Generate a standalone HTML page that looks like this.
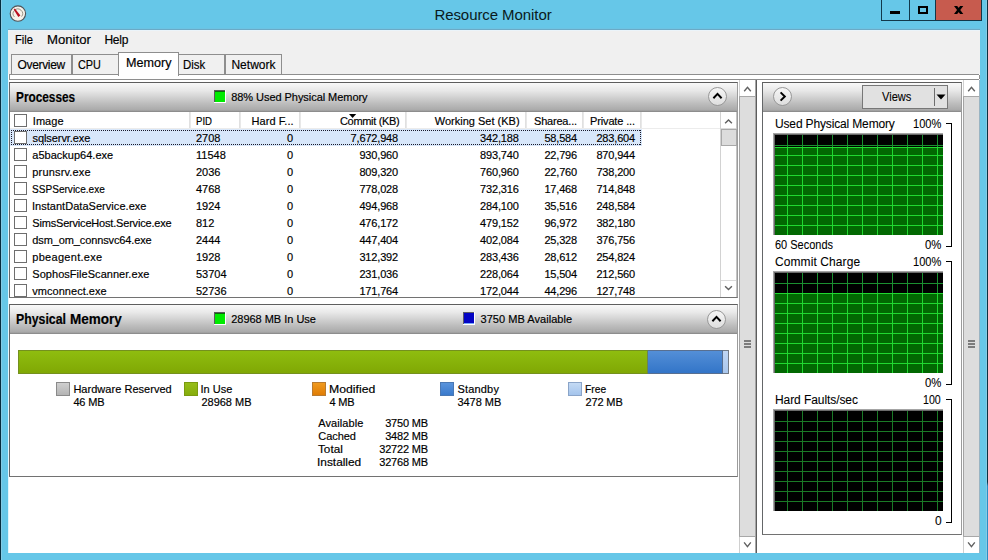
<!DOCTYPE html>
<html><head><meta charset="utf-8"><title>Resource Monitor</title>
<style>
html,body{margin:0;padding:0}
body{width:988px;height:560px;overflow:hidden;background:#66c7e8;position:relative;font-family:"Liberation Sans",sans-serif;font-size:11px;color:#000;-webkit-text-stroke:0.17px #000}
.a{position:absolute}
.t{position:absolute;white-space:nowrap;line-height:17px;height:17px}
.r{text-align:right;letter-spacing:-0.17px}
.client{left:8px;top:30px;width:972px;height:523px;background:#fff}
.tab{position:absolute;top:54px;height:20px;border:1px solid #8e8e8e;border-bottom:none;background:#f0f0f0;box-sizing:border-box;font-size:12px;line-height:20px}
.panel{position:absolute;border:1px solid #727272;border-top-color:#5e5e5e;border-left-color:#646668;border-right-color:#9c9c9c;box-sizing:border-box;background:#fff}
.hdr{position:absolute;left:0;right:0;top:0;height:29px;background:linear-gradient(#f9f9f9 0,#e9e9e9 25%,#d3d3d3 48%,#bcbcbc 72%,#a9a9a9 94%,#8e8e8e 97%,#8c8c8c 100%)}
.hb{position:absolute;font-weight:bold;font-size:12px;line-height:29px;top:0;white-space:nowrap}
.cb{position:absolute;left:14px;width:13px;height:13px;box-sizing:border-box;border:1px solid #6e6e6e;background:#fff}
.row{position:absolute;left:11px;width:631px;height:17px}
.sep{position:absolute;top:112px;width:2px;height:16px;margin-left:-1px;background:linear-gradient(90deg,#dcdcdc,#ececec)}
.sq{position:absolute;width:13px;height:13px;box-sizing:border-box;border:1px solid #9a9a9a}
.circ{position:absolute;width:19px;height:19px;box-sizing:border-box;border:1px solid #989898;border-radius:50%;background:linear-gradient(#f6f6f6,#dedede)}
.graph{position:absolute;left:774px;width:170px;height:101px;background:#000;box-sizing:border-box;border-left:1px solid #c8c8c8;border-top:1px solid #c8c8c8;overflow:hidden}
</style></head><body>

<div class="a" style="left:0;top:0;width:1px;height:560px;background:#042c3e"></div>
<div class="a" style="left:1px;top:0;width:1px;height:560px;background:#86cbe4"></div>
<div class="a" style="left:987px;top:0;width:1px;height:560px;background:linear-gradient(#0a3042 0,#0a3042 482px,#2a8cc4 486px,#2a8cc4 100%)"></div>
<div class="a" style="left:8px;top:28px;width:972px;height:1px;background:#6dc3e3"></div>
<div class="a" style="left:8px;top:29px;width:972px;height:1px;background:#6baac6"></div>
<div class="t" style="left:434.4px;top:6px;letter-spacing:-0.07px;font-size:15px;line-height:18px;height:18px;-webkit-text-stroke:0;color:#0a1a20">Resource Monitor</div>
<svg class="a" style="left:9px;top:5px" width="18" height="18" viewBox="0 0 18 18"><circle cx="8.9" cy="8.6" r="7.7" fill="#f6f2ea" stroke="#505458" stroke-width="1.1"/><path d="M5.4 11.9 A4.7 4.7 0 1 1 12.6 11.6" fill="none" stroke="#8f897c" stroke-width="0.9"/><path d="M4.7 4.4 L5.9 3.6 L11.4 10.5 L9.3 12 Z" fill="#b90f1f"/></svg>
<div class="a" style="left:881px;top:0;width:101px;height:21px;background:#12384a"></div>
<div class="a" style="left:882px;top:0;width:27px;height:20px;background:#66c7e8"></div>
<div class="a" style="left:910px;top:0;width:25px;height:20px;background:#66c7e8"></div>
<div class="a" style="left:936px;top:0;width:45px;height:20px;background:#c75b4e"></div>
<div class="a" style="left:890px;top:11px;width:10px;height:3px;background:#000"></div>
<div class="a" style="left:918px;top:6px;width:10px;height:8px;box-sizing:border-box;border:2px solid #000"></div>
<svg class="a" style="left:954px;top:5.9px" width="10" height="9" viewBox="0 0 10 9"><path d="M0 0 H3.2 L9.3 8.1 H6.1 Z M6.1 0 H9.3 L3.2 8.1 H0 Z" fill="#000"/></svg>
<div class="a client"></div>
<div class="a" style="left:8px;top:80px;width:1px;height:473px;background:#e2f6fe"></div>
<div class="a" style="left:8px;top:30px;width:972px;height:44px;background:#f0f0f0"></div>
<div class="a" style="left:8px;top:30px;width:972px;height:1px;background:#ebf4fa"></div>
<div class="t" style="left:15.0px;top:31px;transform:scaleX(0.928);transform-origin:0 0;font-size:12px;line-height:18px;height:18px">File</div>
<div class="t" style="left:46.5px;top:31px;transform:scaleX(1.095);transform-origin:0 0;font-size:12px;line-height:18px;height:18px">Monitor</div>
<div class="t" style="left:104.4px;top:31px;letter-spacing:-0.24px;font-size:12px;line-height:18px;height:18px">Help</div>
<div class="tab" style="left:11px;width:61px"></div>
<div class="tab" style="left:72px;width:47px"></div>
<div class="tab" style="left:178px;width:47px"></div>
<div class="tab" style="left:225px;width:57px"></div>
<div class="t" style="left:17.5px;top:55px;letter-spacing:-0.33px;font-size:12px;line-height:20px;height:20px">Overview</div>
<div class="t" style="left:78.2px;top:55px;transform:scaleX(0.902);transform-origin:0 0;font-size:12px;line-height:20px;height:20px">CPU</div>
<div class="t" style="left:183.0px;top:55px;transform:scaleX(0.953);transform-origin:0 0;font-size:12px;line-height:20px;height:20px">Disk</div>
<div class="t" style="left:231.4px;top:55px;letter-spacing:0.03px;font-size:12px;line-height:20px;height:20px">Network</div>
<div class="a" style="left:9px;top:74px;width:970px;height:1px;background:#8e8e8e"></div>
<div class="a" style="left:9px;top:79px;width:970px;height:1px;background:#8e8e8e"></div>
<div class="a" style="left:9px;top:75px;width:1px;height:4px;background:#8e8e8e"></div>
<div class="a" style="left:979px;top:75px;width:1px;height:4px;background:#8e8e8e"></div>
<div class="tab" style="left:118px;top:52px;width:61px;height:24px;background:#fff"></div>
<div class="t" style="left:125.5px;top:53px;transform:scaleX(1.050);transform-origin:0 0;font-size:12px;line-height:20px;height:20px">Memory</div>
<div class="panel" style="left:9px;top:82px;width:729px;height:216px"><div class="hdr"></div></div>
<div class="t" style="left:15.9px;top:83px;transform:scaleX(0.844);transform-origin:0 0;font-size:14px;font-weight:bold;line-height:29px;height:29px">Processes</div>
<div class="a" style="left:214px;top:90px;width:12px;height:13px;background:#fff"></div>
<div class="a" style="left:214px;top:90px;width:11px;height:12px;background:#5a5a5a"></div>
<div class="a" style="left:215px;top:91px;width:10px;height:11px;background:#00ea00"></div>
<div class="a" style="left:215px;top:91px;width:10px;height:1px;background:#0a6a0a"></div>
<div class="t" style="left:231.2px;top:89px;letter-spacing:-0.05px">88% Used Physical Memory</div>
<div class="circ" style="left:708px;top:87px"></div>
<svg class="a" style="left:708px;top:87px" width="19" height="19"><path d="M5.4 11.2 L9.5 6.9 L13.6 11.2" stroke="#000" stroke-width="2" fill="none"/></svg>
<div class="sep" style="left:190px"></div>
<div class="sep" style="left:240px"></div>
<div class="sep" style="left:300px"></div>
<div class="sep" style="left:406px"></div>
<div class="sep" style="left:526px"></div>
<div class="sep" style="left:583px"></div>
<div class="sep" style="left:641px"></div>
<div class="a" style="left:10px;top:128px;width:710px;height:1px;background:#ececec"></div>
<div class="cb" style="top:114px"></div>
<div class="t" style="left:32.8px;top:113px;letter-spacing:0.04px">Image</div>
<div class="t" style="left:196.4px;top:113px;transform:scaleX(0.870);transform-origin:0 0">PID</div>
<div class="t" style="left:251.4px;top:113px;letter-spacing:0.09px">Hard F...</div>
<div class="t" style="left:340.0px;top:113px;letter-spacing:-0.33px">Commit (KB)</div>
<div class="t" style="left:434.7px;top:113px;letter-spacing:0.01px">Working Set (KB)</div>
<div class="t" style="left:534.0px;top:113px;letter-spacing:-0.20px">Sharea...</div>
<div class="t" style="left:590.0px;top:113px;letter-spacing:-0.14px">Private ...</div>
<svg class="a" style="left:349px;top:114px" width="8" height="5"><path d="M0 0.1 L7.2 0.1 L3.6 4 Z" fill="#000"/></svg>
<div class="a" style="left:10px;top:129px;width:632px;height:17px;background:#d8e7fa"></div>
<div class="a" style="left:11px;top:130px;width:630px;height:1px;background:repeating-linear-gradient(90deg,#1a1a2a 0 1px,transparent 1px 2px)"></div>
<div class="a" style="left:11px;top:144px;width:630px;height:1px;background:repeating-linear-gradient(90deg,#1a1a2a 0 1px,transparent 1px 2px)"></div>
<div class="a" style="left:11px;top:130px;width:1px;height:15px;background:repeating-linear-gradient(180deg,#1a1a2a 0 1px,transparent 1px 2px)"></div>
<div class="a" style="left:640px;top:130px;width:1px;height:15px;background:repeating-linear-gradient(180deg,#1a1a2a 0 1px,transparent 1px 2px)"></div>
<div class="cb" style="top:131px"></div>
<div class="t" style="left:32.5px;top:130px;letter-spacing:-0.07px">sqlservr.exe</div>
<div class="t" style="left:196px;top:130px">2708</div>
<div class="t r" style="left:240px;width:53px;top:130px">0</div>
<div class="t r" style="left:300px;width:98px;top:130px">7,672,948</div>
<div class="t r" style="left:406px;width:112.7px;top:130px">342,188</div>
<div class="t r" style="left:526px;width:51px;top:130px">58,584</div>
<div class="t r" style="left:583px;width:52px;top:130px">283,604</div>
<div class="cb" style="top:148px"></div>
<div class="t" style="left:32.3px;top:147px;letter-spacing:0.01px">a5backup64.exe</div>
<div class="t" style="left:196px;top:147px">11548</div>
<div class="t r" style="left:240px;width:53px;top:147px">0</div>
<div class="t r" style="left:300px;width:98px;top:147px">930,960</div>
<div class="t r" style="left:406px;width:112.7px;top:147px">893,740</div>
<div class="t r" style="left:526px;width:51px;top:147px">22,796</div>
<div class="t r" style="left:583px;width:52px;top:147px">870,944</div>
<div class="cb" style="top:165px"></div>
<div class="t" style="left:32.3px;top:164px;letter-spacing:0.17px">prunsrv.exe</div>
<div class="t" style="left:196px;top:164px">2036</div>
<div class="t r" style="left:240px;width:53px;top:164px">0</div>
<div class="t r" style="left:300px;width:98px;top:164px">809,320</div>
<div class="t r" style="left:406px;width:112.7px;top:164px">760,960</div>
<div class="t r" style="left:526px;width:51px;top:164px">22,760</div>
<div class="t r" style="left:583px;width:52px;top:164px">738,200</div>
<div class="cb" style="top:182px"></div>
<div class="t" style="left:31.5px;top:181px;transform:scaleX(0.916);transform-origin:0 0">SSPService.exe</div>
<div class="t" style="left:196px;top:181px">4768</div>
<div class="t r" style="left:240px;width:53px;top:181px">0</div>
<div class="t r" style="left:300px;width:98px;top:181px">778,028</div>
<div class="t r" style="left:406px;width:112.7px;top:181px">732,316</div>
<div class="t r" style="left:526px;width:51px;top:181px">17,468</div>
<div class="t r" style="left:583px;width:52px;top:181px">714,848</div>
<div class="cb" style="top:199px"></div>
<div class="t" style="left:31.9px;top:198px;letter-spacing:0.04px">InstantDataService.exe</div>
<div class="t" style="left:196px;top:198px">1924</div>
<div class="t r" style="left:240px;width:53px;top:198px">0</div>
<div class="t r" style="left:300px;width:98px;top:198px">494,968</div>
<div class="t r" style="left:406px;width:112.7px;top:198px">284,100</div>
<div class="t r" style="left:526px;width:51px;top:198px">35,516</div>
<div class="t r" style="left:583px;width:52px;top:198px">248,584</div>
<div class="cb" style="top:216px"></div>
<div class="t" style="left:32.3px;top:215px;letter-spacing:-0.19px">SimsServiceHost.Service.exe</div>
<div class="t" style="left:196px;top:215px">812</div>
<div class="t r" style="left:240px;width:53px;top:215px">0</div>
<div class="t r" style="left:300px;width:98px;top:215px">476,172</div>
<div class="t r" style="left:406px;width:112.7px;top:215px">479,152</div>
<div class="t r" style="left:526px;width:51px;top:215px">96,972</div>
<div class="t r" style="left:583px;width:52px;top:215px">382,180</div>
<div class="cb" style="top:233px"></div>
<div class="t" style="left:32.3px;top:232px;letter-spacing:-0.12px">dsm_om_connsvc64.exe</div>
<div class="t" style="left:196px;top:232px">2444</div>
<div class="t r" style="left:240px;width:53px;top:232px">0</div>
<div class="t r" style="left:300px;width:98px;top:232px">447,404</div>
<div class="t r" style="left:406px;width:112.7px;top:232px">402,084</div>
<div class="t r" style="left:526px;width:51px;top:232px">25,328</div>
<div class="t r" style="left:583px;width:52px;top:232px">376,756</div>
<div class="cb" style="top:250px"></div>
<div class="t" style="left:32.3px;top:249px;letter-spacing:0.29px">pbeagent.exe</div>
<div class="t" style="left:196px;top:249px">1928</div>
<div class="t r" style="left:240px;width:53px;top:249px">0</div>
<div class="t r" style="left:300px;width:98px;top:249px">312,392</div>
<div class="t r" style="left:406px;width:112.7px;top:249px">283,436</div>
<div class="t r" style="left:526px;width:51px;top:249px">28,612</div>
<div class="t r" style="left:583px;width:52px;top:249px">254,824</div>
<div class="cb" style="top:267px"></div>
<div class="t" style="left:32.3px;top:266px;letter-spacing:0.04px">SophosFileScanner.exe</div>
<div class="t" style="left:196px;top:266px">53704</div>
<div class="t r" style="left:240px;width:53px;top:266px">0</div>
<div class="t r" style="left:300px;width:98px;top:266px">231,036</div>
<div class="t r" style="left:406px;width:112.7px;top:266px">228,064</div>
<div class="t r" style="left:526px;width:51px;top:266px">15,504</div>
<div class="t r" style="left:583px;width:52px;top:266px">212,560</div>
<div class="cb" style="top:284px"></div>
<div class="t" style="left:32.3px;top:283px;letter-spacing:0.03px">vmconnect.exe</div>
<div class="t" style="left:196px;top:283px">52736</div>
<div class="t r" style="left:240px;width:53px;top:283px">0</div>
<div class="t r" style="left:300px;width:98px;top:283px">171,764</div>
<div class="t r" style="left:406px;width:112.7px;top:283px">172,044</div>
<div class="t r" style="left:526px;width:51px;top:283px">44,296</div>
<div class="t r" style="left:583px;width:52px;top:283px">127,748</div>
<div class="a" style="left:10px;top:297px;width:727px;height:1px;background:#727272"></div>
<div class="a" style="left:10px;top:298px;width:727px;height:6px;background:#fff"></div>
<div class="a" style="left:720px;top:112px;width:17px;height:185px;background:#fff;border-left:1px solid #d2d2d2;box-sizing:border-box"></div>
<div class="a" style="left:721px;top:128px;width:16px;height:1px;background:#dadada"></div>
<div class="a" style="left:721px;top:280px;width:16px;height:1px;background:#dadada"></div>
<div class="a" style="left:736px;top:112px;width:1px;height:185px;background:#c4c4c4"></div>
<div class="a" style="left:721px;top:129px;width:16px;height:17px;background:#dcdcdc;border:1px solid #a8a8a8;box-sizing:border-box"></div>
<svg class="a" style="left:721px;top:112px" width="16" height="17"><path d="M4.1 11.3 L7.5 7.9 L10.9 11.3" stroke="#606060" stroke-width="1.4" fill="none"/></svg>
<svg class="a" style="left:721px;top:280px" width="16" height="17"><path d="M4.1 6.2 L7.5 9.6 L10.9 6.2" stroke="#606060" stroke-width="1.4" fill="none"/></svg>
<div class="panel" style="left:9px;top:304px;width:729px;height:173px"><div class="hdr"></div></div>
<div class="t" style="left:16.0px;top:305px;transform:scaleX(0.880);transform-origin:0 0;font-size:14px;font-weight:bold;line-height:29px;height:29px">Physical</div>
<div class="t" style="left:70.0px;top:305px;transform:scaleX(0.965);transform-origin:0 0;font-size:14px;font-weight:bold;line-height:29px;height:29px">Memory</div>
<div class="a" style="left:214px;top:312px;width:12px;height:13px;background:#fff"></div>
<div class="a" style="left:214px;top:312px;width:11px;height:12px;background:#5a5a5a"></div>
<div class="a" style="left:215px;top:313px;width:10px;height:11px;background:#00ea00"></div>
<div class="a" style="left:215px;top:313px;width:10px;height:1px;background:#0a6a0a"></div>
<div class="t" style="left:231.2px;top:311px;letter-spacing:-0.02px">28968 MB In Use</div>
<div class="a" style="left:463px;top:312px;width:12px;height:13px;background:#fff"></div>
<div class="a" style="left:463px;top:312px;width:11px;height:12px;background:#5a5a6a"></div>
<div class="a" style="left:464px;top:313px;width:10px;height:11px;background:#0404c4"></div>
<div class="a" style="left:464px;top:323px;width:10px;height:1px;background:#78a8ff"></div>
<div class="t" style="left:480.5px;top:311px;letter-spacing:0.04px">3750 MB Available</div>
<div class="circ" style="left:707px;top:309.5px"></div>
<svg class="a" style="left:707px;top:309.5px" width="19" height="19"><path d="M5.4 11.2 L9.5 6.9 L13.6 11.2" stroke="#000" stroke-width="2" fill="none"/></svg>
<div class="a" style="left:18px;top:350px;width:630px;height:24px;box-sizing:border-box;border:1px solid #74901e;border-right-color:#6c8450;background:linear-gradient(#8fbd0f,#80a804)"></div>
<div class="a" style="left:648px;top:350px;width:75px;height:24px;box-sizing:border-box;border:1px solid #586f90;border-left:none;background:linear-gradient(#548fd7,#3375c8)"></div>
<div class="a" style="left:723px;top:350px;width:6px;height:24px;box-sizing:border-box;border:1px solid #727a84;border-left:none;background:linear-gradient(#bfd6f4,#a9c6ec)"></div>
<div class="sq" style="left:56px;top:382px;width:14px;height:14px;background:linear-gradient(#cfcfcf,#b4b4b4);border-color:#8a8a8a"></div>
<div class="t" style="left:73.4px;top:382px;letter-spacing:0.03px;line-height:15px;height:15px">Hardware Reserved</div>
<div class="t" style="left:73.4px;top:395px;letter-spacing:-0.14px;line-height:15px;height:15px">46 MB</div>
<div class="sq" style="left:184px;top:382px;width:14px;height:14px;background:linear-gradient(#96bd1a,#86ad0c);border-color:#7a9a10"></div>
<div class="t" style="left:200.4px;top:382px;letter-spacing:0.03px;line-height:15px;height:15px">In Use</div>
<div class="t" style="left:201.4px;top:395px;letter-spacing:-0.00px;line-height:15px;height:15px">28968 MB</div>
<div class="sq" style="left:312px;top:382px;width:14px;height:14px;background:linear-gradient(#f09a20,#e07c04);border-color:#b87a30"></div>
<div class="t" style="left:329.4px;top:382px;transform:scaleX(1.112);transform-origin:0 0;line-height:15px;height:15px">Modified</div>
<div class="t" style="left:329.4px;top:395px;letter-spacing:-0.15px;line-height:15px;height:15px">4 MB</div>
<div class="sq" style="left:440px;top:382px;width:14px;height:14px;background:linear-gradient(#5a94dc,#3a7acc);border-color:#4a78b4"></div>
<div class="t" style="left:457.4px;top:382px;letter-spacing:0.19px;line-height:15px;height:15px">Standby</div>
<div class="t" style="left:457.4px;top:395px;letter-spacing:-0.01px;line-height:15px;height:15px">3478 MB</div>
<div class="sq" style="left:568px;top:382px;width:14px;height:14px;background:linear-gradient(#c4daf4,#a4c4ec);border-color:#8aa4c8"></div>
<div class="t" style="left:585.4px;top:382px;transform:scaleX(0.933);transform-origin:0 0;line-height:15px;height:15px">Free</div>
<div class="t" style="left:585.4px;top:395px;letter-spacing:-0.11px;line-height:15px;height:15px">272 MB</div>
<div class="t" style="left:318.3px;top:416px;letter-spacing:0.08px;line-height:14px;height:14px">Available</div>
<div class="t r" style="left:360px;width:68px;top:416px;line-height:14px;height:14px">3750 MB</div>
<div class="t" style="left:318.3px;top:429px;letter-spacing:-0.06px;line-height:14px;height:14px">Cached</div>
<div class="t r" style="left:360px;width:68px;top:429px;line-height:14px;height:14px">3482 MB</div>
<div class="t" style="left:318.3px;top:442px;transform:scaleX(1.066);transform-origin:0 0;line-height:14px;height:14px">Total</div>
<div class="t r" style="left:360px;width:68px;top:442px;line-height:14px;height:14px">32722 MB</div>
<div class="t" style="left:317.2px;top:455px;transform:scaleX(1.079);transform-origin:0 0;line-height:14px;height:14px">Installed</div>
<div class="t r" style="left:360px;width:68px;top:455px;line-height:14px;height:14px">32768 MB</div>
<div class="a" style="left:739px;top:80px;width:17px;height:473px;background:#dddddd;border-left:1px solid #a4a4a4;box-sizing:border-box"></div>
<div class="a" style="left:739px;top:96px;width:17px;height:1px;background:#a8a8a8"></div>
<div class="a" style="left:739px;top:536px;width:17px;height:1px;background:#a8a8a8"></div>
<div class="a" style="left:739px;top:80px;width:17px;height:16px;background:#fff;border-left:1px solid #d0d0d0;box-sizing:border-box"></div>
<div class="a" style="left:739px;top:537px;width:17px;height:16px;background:#fff;border-left:1px solid #d0d0d0;box-sizing:border-box"></div>
<svg class="a" style="left:739px;top:80px" width="17" height="16"><path d="M5.2 11.2 L8.5 7.4 L11.8 11.2" stroke="#606060" stroke-width="1.4" fill="none"/></svg>
<svg class="a" style="left:739px;top:537px" width="17" height="16"><path d="M5.1 5.4 L8.45 9.6 L11.8 5.4" stroke="#606060" stroke-width="1.4" fill="none"/></svg>
<svg class="a" style="left:744px;top:339px" width="7" height="10"><path d="M0 2 H7 M0 5 H7 M0 8 H7" stroke="#5c5c5c" stroke-width="1.4"/></svg>
<div class="a" style="left:755px;top:80px;width:1px;height:473px;background:#a6a6a6"></div>
<div class="a" style="left:756px;top:80px;width:1px;height:473px;background:#5c5c5c"></div>
<div class="a" style="left:963px;top:80px;width:17px;height:473px;background:#dddddd;border-left:1px solid #a4a4a4;box-sizing:border-box"></div>
<div class="a" style="left:963px;top:96px;width:17px;height:1px;background:#a8a8a8"></div>
<div class="a" style="left:963px;top:536px;width:17px;height:1px;background:#a8a8a8"></div>
<div class="a" style="left:963px;top:80px;width:17px;height:16px;background:#fff;border-left:1px solid #d0d0d0;box-sizing:border-box"></div>
<div class="a" style="left:963px;top:537px;width:17px;height:16px;background:#fff;border-left:1px solid #d0d0d0;box-sizing:border-box"></div>
<svg class="a" style="left:963px;top:80px" width="17" height="16"><path d="M5.2 11.2 L8.5 7.4 L11.8 11.2" stroke="#606060" stroke-width="1.4" fill="none"/></svg>
<svg class="a" style="left:963px;top:537px" width="17" height="16"><path d="M5.1 5.4 L8.45 9.6 L11.8 5.4" stroke="#606060" stroke-width="1.4" fill="none"/></svg>
<svg class="a" style="left:968px;top:339px" width="7" height="10"><path d="M0 2 H7 M0 5 H7 M0 8 H7" stroke="#5c5c5c" stroke-width="1.4"/></svg>
<div class="a" style="left:979px;top:80px;width:1px;height:473px;background:#9ab4c2"></div>
<div class="a" style="left:986px;top:0;width:1px;height:560px;background:#86cbe4"></div>
<div class="panel" style="left:762px;top:82px;width:200px;height:453px"><div class="hdr"></div></div>
<div class="circ" style="left:773px;top:87px"></div>
<svg class="a" style="left:773px;top:87px" width="19" height="19"><path d="M7.6 5.4 L11.8 9.5 L7.6 13.6" stroke="#000" stroke-width="2" fill="none"/></svg>
<div class="a" style="left:862px;top:85px;width:86px;height:24px;box-sizing:border-box;border:1px solid #777;background:#e1e1e1"></div>
<div class="t" style="left:882.4px;top:89px;transform:scaleX(0.925);transform-origin:0 0;font-size:12px;-webkit-text-stroke:0.08px #000">Views</div>
<div class="a" style="left:933.5px;top:88px;width:1.4px;height:18px;background:#6e6e6e"></div>
<svg class="a" style="left:936px;top:94px" width="10" height="6"><path d="M0.5 0.5 L9.5 0.5 L5 5.5 Z" fill="#000"/></svg>
<div class="t" style="left:775.0px;top:116px;letter-spacing:-0.15px;font-size:12px;-webkit-text-stroke:0.08px #000">Used Physical Memory</div>
<div class="t" style="left:912.6px;top:116px;transform:scaleX(0.925);transform-origin:0 0;font-size:12px;-webkit-text-stroke:0.08px #000">100%</div>
<div class="t" style="left:775.2px;top:237px;transform:scaleX(0.915);transform-origin:0 0;font-size:12px;-webkit-text-stroke:0.08px #000">60 Seconds</div>
<div class="t" style="left:924.6px;top:237px;transform:scaleX(0.945);transform-origin:0 0;font-size:12px;-webkit-text-stroke:0.08px #000">0%</div>
<div class="a" style="left:946px;top:123px;width:6px;height:124px;box-sizing:border-box;border:1px solid #000;border-left:none"></div>
<svg class="a" style="left:773px;top:133px" width="170" height="102" viewBox="-2 -2 170 102"><rect x="-2" y="-2" width="170" height="102" fill="#a4a4a4"/><rect x="-1" y="-1" width="169" height="101" fill="#6a6a6a"/><rect x="0" y="0" width="168" height="100" fill="#000"/><rect x="0" y="12" width="168" height="88" fill="#026802"/><clipPath id="c135a"><rect x="0" y="0" width="168" height="12"/></clipPath><clipPath id="c135b"><rect x="0" y="12" width="168" height="88"/></clipPath><path d="M12.5 0 V100 M27.5 0 V100 M42.5 0 V100 M57.5 0 V100 M72.5 0 V100 M87.5 0 V100 M102.5 0 V100 M117.5 0 V100 M132.5 0 V100 M147.5 0 V100 M162.5 0 V100 M0 10.5 H168 M0 20.5 H168 M0 30.5 H168 M0 40.5 H168 M0 50.5 H168 M0 60.5 H168 M0 70.5 H168 M0 80.5 H168 M0 90.5 H168" stroke="#1a9030" stroke-width="1" fill="none" clip-path="url(#c135a)"/><path d="M12.5 0 V100 M27.5 0 V100 M42.5 0 V100 M57.5 0 V100 M72.5 0 V100 M87.5 0 V100 M102.5 0 V100 M117.5 0 V100 M132.5 0 V100 M147.5 0 V100 M162.5 0 V100 M0 10.5 H168 M0 20.5 H168 M0 30.5 H168 M0 40.5 H168 M0 50.5 H168 M0 60.5 H168 M0 70.5 H168 M0 80.5 H168 M0 90.5 H168" stroke="#20d830" stroke-width="1" fill="none" clip-path="url(#c135b)"/><path d="M0 12.5 H168" stroke="#20d830" stroke-width="1"/></svg>
<div class="t" style="left:775.0px;top:254px;letter-spacing:0.09px;font-size:12px;-webkit-text-stroke:0.08px #000">Commit Charge</div>
<div class="t" style="left:912.6px;top:254px;transform:scaleX(0.925);transform-origin:0 0;font-size:12px;-webkit-text-stroke:0.08px #000">100%</div>
<div class="t" style="left:924.6px;top:375px;transform:scaleX(0.945);transform-origin:0 0;font-size:12px;-webkit-text-stroke:0.08px #000">0%</div>
<div class="a" style="left:946px;top:261px;width:6px;height:124px;box-sizing:border-box;border:1px solid #000;border-left:none"></div>
<svg class="a" style="left:773px;top:271px" width="170" height="102" viewBox="-2 -2 170 102"><rect x="-2" y="-2" width="170" height="102" fill="#a4a4a4"/><rect x="-1" y="-1" width="169" height="101" fill="#6a6a6a"/><rect x="0" y="0" width="168" height="100" fill="#000"/><rect x="0" y="20" width="168" height="80" fill="#026802"/><clipPath id="c273a"><rect x="0" y="0" width="168" height="20"/></clipPath><clipPath id="c273b"><rect x="0" y="20" width="168" height="80"/></clipPath><path d="M12.5 0 V100 M27.5 0 V100 M42.5 0 V100 M57.5 0 V100 M72.5 0 V100 M87.5 0 V100 M102.5 0 V100 M117.5 0 V100 M132.5 0 V100 M147.5 0 V100 M162.5 0 V100 M0 10.5 H168 M0 20.5 H168 M0 30.5 H168 M0 40.5 H168 M0 50.5 H168 M0 60.5 H168 M0 70.5 H168 M0 80.5 H168 M0 90.5 H168" stroke="#1a9030" stroke-width="1" fill="none" clip-path="url(#c273a)"/><path d="M12.5 0 V100 M27.5 0 V100 M42.5 0 V100 M57.5 0 V100 M72.5 0 V100 M87.5 0 V100 M102.5 0 V100 M117.5 0 V100 M132.5 0 V100 M147.5 0 V100 M162.5 0 V100 M0 10.5 H168 M0 20.5 H168 M0 30.5 H168 M0 40.5 H168 M0 50.5 H168 M0 60.5 H168 M0 70.5 H168 M0 80.5 H168 M0 90.5 H168" stroke="#20d830" stroke-width="1" fill="none" clip-path="url(#c273b)"/><path d="M0 20.5 H168" stroke="#20d830" stroke-width="1"/></svg>
<div class="t" style="left:775.0px;top:392px;letter-spacing:-0.08px;font-size:12px;-webkit-text-stroke:0.08px #000">Hard Faults/sec</div>
<div class="t" style="left:923.0px;top:392px;transform:scaleX(0.885);transform-origin:0 0;font-size:12px;-webkit-text-stroke:0.08px #000">100</div>
<div class="t" style="left:935.0px;top:513px;letter-spacing:0.00px;font-size:12px;-webkit-text-stroke:0.08px #000">0</div>
<div class="a" style="left:946px;top:399px;width:6px;height:124px;box-sizing:border-box;border:1px solid #000;border-left:none"></div>
<svg class="a" style="left:773px;top:409px" width="170" height="102" viewBox="-2 -2 170 102"><rect x="-2" y="-2" width="170" height="102" fill="#a4a4a4"/><rect x="-1" y="-1" width="169" height="101" fill="#6a6a6a"/><rect x="0" y="0" width="168" height="100" fill="#000"/><path d="M12.5 0 V100 M27.5 0 V100 M42.5 0 V100 M57.5 0 V100 M72.5 0 V100 M87.5 0 V100 M102.5 0 V100 M117.5 0 V100 M132.5 0 V100 M147.5 0 V100 M162.5 0 V100 M0 10.5 H168 M0 20.5 H168 M0 30.5 H168 M0 40.5 H168 M0 50.5 H168 M0 60.5 H168 M0 70.5 H168 M0 80.5 H168 M0 90.5 H168" stroke="#1a7a26" stroke-width="1" fill="none"/></svg>
</body></html>
